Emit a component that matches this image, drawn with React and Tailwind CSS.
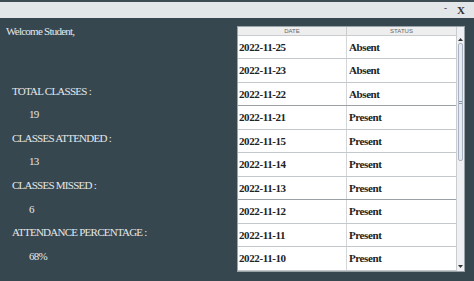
const stats = [
  { label: 'TOTAL CLASSES :', value: '19' },
  { label: 'CLASSES ATTENDED :', value: '13' },
  { label: 'CLASSES MISSED :', value: '6' },
  { label: 'ATTENDANCE PERCENTAGE :', value: '68%' },
];

const rows = [
  ['2022-11-25', 'Absent'],
  ['2022-11-23', 'Absent'],
  ['2022-11-22', 'Absent'],
  ['2022-11-21', 'Present'],
  ['2022-11-15', 'Present'],
  ['2022-11-14', 'Present'],
  ['2022-11-13', 'Present'],
  ['2022-11-12', 'Present'],
  ['2022-11-11', 'Present'],
  ['2022-11-10', 'Present'],
];

const serif = "font-['Liberation_Serif',serif]";

const App = () => {
  return (
    <div className="w-[474px] h-[281px] flex flex-col overflow-hidden bg-[#37474f]">
      <div className="h-[2px] bg-[#3d4b53]" />
      {/* title bar */}
      <div className={`h-[16px] bg-[#e3e6e8] flex items-center justify-end pr-[9px] gap-[10px] text-[#333] ${serif}`}>
        <span className="text-[9px] font-bold leading-none -mt-[3px]">-</span>
        <span className="text-[11px] font-bold leading-none">X</span>
      </div>

      <div className="flex-1 flex">
        {/* left side */}
        <div className={`w-[237px] text-[#e3e7e9] text-[11px] tracking-[-0.75px] ${serif}`}>
          <div className="h-[12px] mt-[7px] pl-[6px] flex items-center leading-none">Welcome Student,</div>
          <div className="mt-[42px]">
            {stats.map((s) => (
              <div key={s.label}>
                <div className="h-[23.6px] flex items-center pl-[12px]">{s.label}</div>
                <div className="h-[23.6px] flex items-center pl-[29px]">{s.value}</div>
              </div>
            ))}
          </div>
        </div>

        {/* attendance table */}
        <div className="mt-[8px] w-[228px] h-[246px] flex border border-[#9aa3a8] bg-white">
          <div className="flex-1 flex flex-col">
            <div className="h-[9px] flex bg-[#eeeeee] border-b border-[#c9cdd0] text-[6px] text-[#666] font-['Liberation_Sans',sans-serif] leading-none">
              <div className="w-[109px] flex items-center justify-center border-r border-[#c9cdd0]">DATE</div>
              <div className="flex-1 flex items-center justify-center">STATUS</div>
            </div>
            {rows.map(([d, s], i) => (
              <div
                key={d}
                className={`h-[23.6px] flex border-b ${i === 2 || i === 6 ? 'border-[#9aa1a6]' : 'border-[#c3c8cc]'} text-[11px] font-bold text-[#222] ${serif} tracking-[-0.4px]`}
              >
                <div className="w-[109px] flex items-center pl-[1px] border-r border-[#d3d7da]">{d}</div>
                <div className="flex-1 flex items-center pl-[2px]">{s}</div>
              </div>
            ))}
          </div>
          {/* scrollbar */}
          <div className="w-[8px] flex flex-col bg-[#eef0f3] border-l border-[#c9cdd0]">
            <div className="h-[16px] flex items-end justify-center pb-[2px]">
              <svg width="5" height="3" viewBox="0 0 5 3"><path d="M2.5 0L5 3H0z" fill="#333" /></svg>
            </div>
            <div className="h-[118px] mx-[1px] rounded-[2px] bg-[#e7ebf2] border border-[#a9b3c2] flex items-center justify-center">
              <div className="w-[4px] h-[3px] border-y border-[#8c96a5]" />
            </div>
            <div className="flex-1" />
            <div className="h-[10px] flex items-center justify-center">
              <svg width="5" height="3" viewBox="0 0 5 3"><path d="M0 0H5L2.5 3z" fill="#333" /></svg>
            </div>
          </div>
        </div>
      </div>
    </div>
  );
};

export default App;
